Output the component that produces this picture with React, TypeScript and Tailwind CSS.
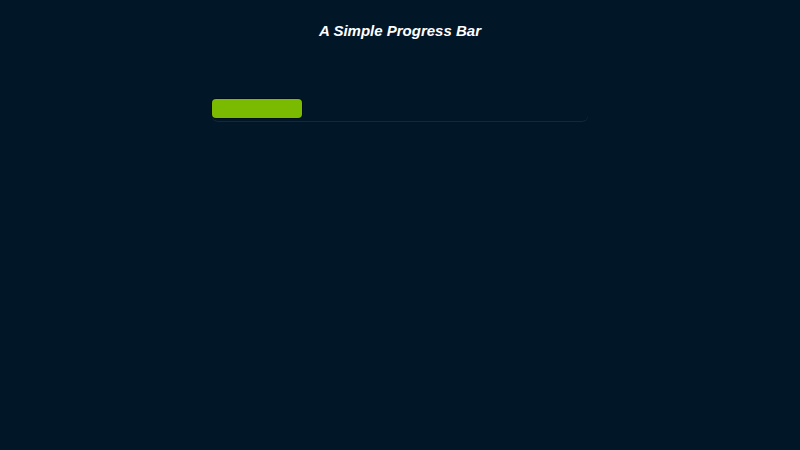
export default function App() {
  return (
    <div className="min-h-[450px] w-full bg-[#011627] font-['Liberation_Sans',Arial,sans-serif]">
      <h1 className="pt-[22px] text-center text-[15px] leading-[18px] font-bold italic text-white">A Simple Progress Bar</h1>
      <div className="mx-auto mt-[59px] h-[22px] w-[376px] rounded-md shadow-[0_1px_rgba(255,255,255,0.08)]">
        <div className="h-[19px] w-[90px] rounded bg-[#7aba00] shadow-[0_0_0_1px_rgba(0,0,0,0.35)]" />
      </div>
    </div>
  );
}
